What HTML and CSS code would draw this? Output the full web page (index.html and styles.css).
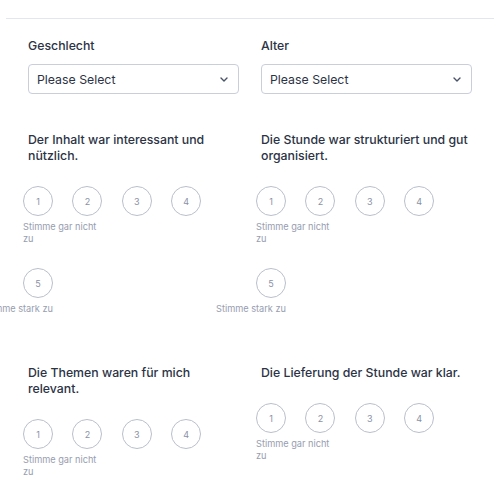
FILE: index.html
```html
<!DOCTYPE html>
<html lang="de">
<head>
    <meta charset="UTF-8">
    <meta name="viewport" content="width=device-width, initial-scale=1.0">
    <title>Feedback Formular</title>
    <link rel="stylesheet" href="styles.css">
</head>
<body>
    <div class="divider"></div>
    <form class="form">
        <div class="row row-first">
            <div class="field">
                <label class="field-label" for="gender">Geschlecht</label>
                <div class="select-wrap">
                    <select id="gender" class="select">
                        <option>Please Select</option>
                        <option>Männlich</option>
                        <option>Weiblich</option>
                        <option>Divers</option>
                    </select>
                    <svg class="chevron" width="8" height="5" viewBox="0 0 8 5"><path d="M1 1l3 3 3-3" fill="none" stroke="#4a5268" stroke-width="1.4" stroke-linecap="round" stroke-linejoin="round"/></svg>
                </div>
            </div>
            <div class="field">
                <label class="field-label" for="age">Alter</label>
                <div class="select-wrap">
                    <select id="age" class="select">
                        <option>Please Select</option>
                        <option>unter 18</option>
                        <option>18 - 25</option>
                        <option>26 - 40</option>
                        <option>über 40</option>
                    </select>
                    <svg class="chevron" width="8" height="5" viewBox="0 0 8 5"><path d="M1 1l3 3 3-3" fill="none" stroke="#4a5268" stroke-width="1.4" stroke-linecap="round" stroke-linejoin="round"/></svg>
                </div>
            </div>
        </div>

        <div class="row">
            <div class="field">
                <div class="question">Der Inhalt war interessant und nützlich.</div>
                <div class="scale">
                    <div class="option option-first"><span class="circle">1</span><span class="scale-label">Stimme gar nicht zu</span></div>
                    <div class="option"><span class="circle">2</span></div>
                    <div class="option"><span class="circle">3</span></div>
                    <div class="option"><span class="circle">4</span></div>
                    <div class="option option-last"><span class="circle">5</span><span class="scale-label">Stimme stark zu</span></div>
                </div>
            </div>
            <div class="field">
                <div class="question">Die Stunde war strukturiert und gut organisiert.</div>
                <div class="scale">
                    <div class="option option-first"><span class="circle">1</span><span class="scale-label">Stimme gar nicht zu</span></div>
                    <div class="option"><span class="circle">2</span></div>
                    <div class="option"><span class="circle">3</span></div>
                    <div class="option"><span class="circle">4</span></div>
                    <div class="option option-last"><span class="circle">5</span><span class="scale-label">Stimme stark zu</span></div>
                </div>
            </div>
        </div>

        <div class="row">
            <div class="field">
                <div class="question">Die Themen waren für mich relevant.</div>
                <div class="scale">
                    <div class="option option-first"><span class="circle">1</span><span class="scale-label">Stimme gar nicht zu</span></div>
                    <div class="option"><span class="circle">2</span></div>
                    <div class="option"><span class="circle">3</span></div>
                    <div class="option"><span class="circle">4</span></div>
                    <div class="option option-last"><span class="circle">5</span><span class="scale-label">Stimme stark zu</span></div>
                </div>
            </div>
            <div class="field">
                <div class="question">Die Lieferung der Stunde war klar.</div>
                <div class="scale">
                    <div class="option option-first"><span class="circle">1</span><span class="scale-label">Stimme gar nicht zu</span></div>
                    <div class="option"><span class="circle">2</span></div>
                    <div class="option"><span class="circle">3</span></div>
                    <div class="option"><span class="circle">4</span></div>
                    <div class="option option-last"><span class="circle">5</span><span class="scale-label">Stimme stark zu</span></div>
                </div>
            </div>
        </div>
    </form>
</body>
</html>
```

FILE: styles.css
```css
body {
    margin: 0;
    font-family: 'Inter', 'Noto Sans', sans-serif;
    background-color: #ffffff;
    color: #2c3345;
    overflow: hidden;
}

.divider {
    margin: 18px 6px 0 6px;
    height: 1px;
    background-color: #e3e6ee;
}

.form {
    padding: 0 17px;
}

.row {
    display: grid;
    grid-template-columns: 233px 233px;
    margin-top: 38px;
}

.row-first {
    margin-top: 18px;
}

.field {
    padding: 0 11px;
}

.field-label {
    display: block;
    font-size: 12.3px;
    line-height: 18px;
    font-weight: 500;
    margin-bottom: 9px;
}

.select-wrap {
    position: relative;
}

.select {
    display: block;
    width: 100%;
    height: 30px;
    padding: 0 8px;
    box-sizing: border-box;
    border: 1px solid #c8ceda;
    border-radius: 4px;
    background-color: #ffffff;
    font-family: inherit;
    font-size: 12.3px;
    color: #2c3345;
    appearance: none;
    -webkit-appearance: none;
    outline: none;
}

.chevron {
    position: absolute;
    right: 11px;
    top: 13px;
    pointer-events: none;
}

.question {
    font-size: 12.3px;
    line-height: 16px;
    font-weight: 500;
    margin-bottom: 22px;
}

.scale {
    display: flex;
    flex-wrap: wrap;
    column-gap: 19.4px;
    row-gap: 23px;
    width: 216px;
    margin-left: -5px;
}

.option {
    width: 30px;
    display: flex;
    flex-direction: column;
    align-items: flex-start;
}

.circle {
    width: 30px;
    height: 30px;
    box-sizing: border-box;
    border: 1px solid #b9bfcc;
    border-radius: 50%;
    display: flex;
    align-items: center;
    justify-content: center;
    font-size: 9px;
    color: #8a91a5;
    cursor: pointer;
}

.scale-label {
    margin-top: 5px;
    width: 78px;
    height: 24px;
    font-size: 9.2px;
    line-height: 12px;
    color: #979db0;
}

.option-last .scale-label {
    align-self: flex-end;
    width: auto;
    white-space: nowrap;
    text-align: right;
}
```
